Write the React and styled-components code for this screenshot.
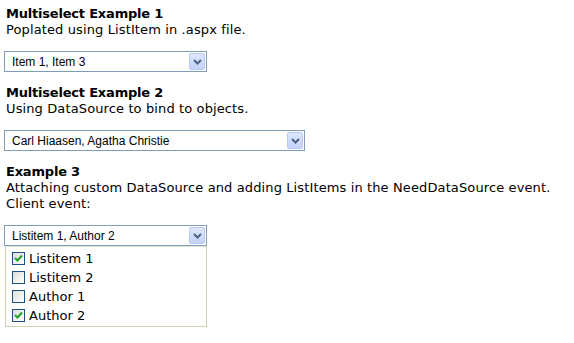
import React from 'react';
import styled, { createGlobalStyle } from 'styled-components';

const GlobalStyle = createGlobalStyle`
  html, body {
    margin: 0;
    background: #ffffff;
  }
  body {
    padding: 6px 4px;
    font-family: "DejaVu Sans", Verdana, sans-serif;
    font-size: 13px;
    color: #000;
  }
`;

const Page = styled.div`
  display: flex;
  flex-direction: column;
`;

const Section = styled.section`
  display: flex;
  flex-direction: column;
  align-items: flex-start;
  margin-bottom: 13px;
`;

const Heading = styled.div`
  font-weight: bold;
  line-height: 16px;
  padding-left: 2px;
  letter-spacing: -0.2px;
`;

const Text = styled.div`
  line-height: 16px;
  padding-left: 2px;
  letter-spacing: 0.12px;
`;

const ComboWrap = styled.div`
  display: flex;
  flex-direction: column;
  margin-top: 13px;
`;

const Combo = styled.div`
  box-sizing: border-box;
  width: ${p => p.width}px;
  height: 21px;
  border: 1px solid #7f9db9;
  display: flex;
  align-items: center;
  justify-content: space-between;
  padding: 0 1px 0 7px;
  background: #fff;
`;

const ComboText = styled.span`
  font-family: "Liberation Sans", Arial, sans-serif;
  font-size: 12px;
  color: #000;
`;

const Arrow = styled.span`
  width: 16px;
  height: 17px;
  box-sizing: border-box;
  border: 1px solid #b9c9ef;
  border-radius: 2px;
  background: linear-gradient(180deg, #dde6fd 0%, #c4d2f8 100%);
  display: flex;
  align-items: center;
  justify-content: center;
`;

const DropList = styled.div`
  box-sizing: border-box;
  margin-left: 1px;
  width: 202px;
  border: 1px solid #cfd1b0;
  border-top-color: #e4e5d0;
  padding: 2px 0 1px 6px;
  background: #fff;
  display: flex;
  flex-direction: column;
`;

const Item = styled.label`
  display: flex;
  align-items: center;
  height: 19px;
  gap: 4px;
`;

const Box = styled.span`
  width: 13px;
  height: 13px;
  box-sizing: border-box;
  border: 1px solid #1c5180;
  background: linear-gradient(135deg, #dcdcd7 0%, #f6f6f4 70%, #ffffff 100%);
  display: flex;
  align-items: center;
  justify-content: center;
`;

const Chevron = () => (
  <svg width="9" height="6" viewBox="0 0 9 6">
    <path d="M1 1 L4.5 4.5 L8 1" fill="none" stroke="#4d6185" strokeWidth="2" />
  </svg>
);

const Check = () => (
  <svg width="9" height="9" viewBox="0 0 9 9">
    <path d="M1 4 L3.5 6.5 L8 1.5" fill="none" stroke="#21a121" strokeWidth="2" />
  </svg>
);

const Select = ({ width, value }) => (
  <Combo width={width}>
    <ComboText>{value}</ComboText>
    <Arrow><Chevron /></Arrow>
  </Combo>
);

const items = [
  { label: 'Listitem 1', checked: true },
  { label: 'Listitem 2', checked: false },
  { label: 'Author 1', checked: false },
  { label: 'Author 2', checked: true },
];

export default function App() {
  return (
    <Page>
      <GlobalStyle />
      <Section>
        <Heading>Multiselect Example 1</Heading>
        <Text>Poplated using ListItem in .aspx file.</Text>
        <ComboWrap>
          <Select width={203} value="Item 1, Item 3" />
        </ComboWrap>
      </Section>
      <Section>
        <Heading>Multiselect Example 2</Heading>
        <Text>Using DataSource to bind to objects.</Text>
        <ComboWrap>
          <Select width={301} value="Carl Hiaasen, Agatha Christie" />
        </ComboWrap>
      </Section>
      <Section>
        <Heading>Example 3</Heading>
        <Text>Attaching custom DataSource and adding ListItems in the NeedDataSource event.</Text>
        <Text>Client event:</Text>
        <ComboWrap>
          <Select width={203} value="Listitem 1, Author 2" />
          <DropList>
            {items.map(it => (
              <Item key={it.label}>
                <Box>{it.checked && <Check />}</Box>
                {it.label}
              </Item>
            ))}
          </DropList>
        </ComboWrap>
      </Section>
    </Page>
  );
}
